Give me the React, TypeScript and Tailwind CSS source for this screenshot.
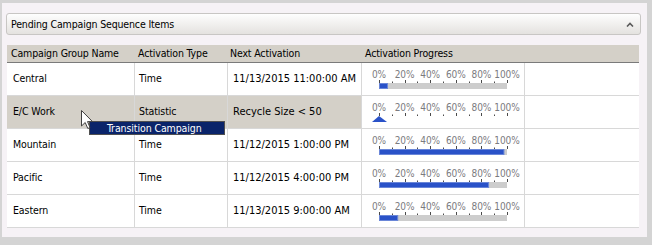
import React from "react";

const FONT = "'DejaVu Sans Condensed', 'DejaVu Sans', sans-serif";

type Row = {
  name: string;
  type: string;
  next: string;
  value: number | null;
  selected?: boolean;
};

const rows: Row[] = [
  { name: "Central", type: "Time", next: "11/13/2015 11:00:00 AM", value: 0.07 },
  { name: "E/C Work", type: "Statistic", next: "Recycle Size < 50", value: null, selected: true },
  { name: "Mountain", type: "Time", next: "11/12/2015 1:00:00 PM", value: 0.98 },
  { name: "Pacific", type: "Time", next: "11/12/2015 4:00:00 PM", value: 0.86 },
  { name: "Eastern", type: "Time", next: "11/13/2015 9:00:00 AM", value: 0.15 },
];

function Progress({ value }: { value: number | null }) {
  const x0 = 17;
  const w = 128;
  const labels = ["0%", "20%", "40%", "60%", "80%", "100%"];
  return (
    <svg width="163" height="32" viewBox="0 0 163 32" className="block">
      {labels.map((l, i) => (
        <text
          key={l}
          x={x0 + i * 25.6}
          y={15}
          textAnchor="middle"
          fontSize="10"
          fill="#7b7b80"
          fontFamily={FONT}
        >
          {l}
        </text>
      ))}
      {value !== null && <rect x={x0} y={20} width={w} height={6} fill="#cdcdcd" />}
      {Array.from({ length: 11 }, (_, i) => {
        const x = Math.round(x0 + i * 12.8) + 0.5;
        const major = i % 2 === 0;
        return (
          <line
            key={i}
            x1={x}
            x2={x}
            y1={major ? 17 : 18.5}
            y2={20}
            stroke="#4a4a4a"
            strokeWidth={1}
          />
        );
      })}
      {value !== null && (
        <rect
          x={x0 + 0.5}
          y={20.5}
          width={Math.max(0, value * w - 1)}
          height={5}
          fill="#2a52c8"
          stroke="#6a86d8"
          strokeWidth={1}
        />
      )}
      {value === null && <polygon points="17,20 10,26 25,26" fill="#2a52c8" />}
    </svg>
  );
}

export default function App() {
  return (
    <div
      className="w-[652px] h-[245px] bg-[#d4d4d4] pt-[3px] pl-[2px] pr-[5px] pb-[8px]"
      style={{ fontFamily: FONT }}
    >
      <div className="h-full bg-[#f6f2f6] flex flex-col">
        {/* Header bar */}
        <div className="mt-[10px] ml-[4px] mr-[6px] h-[22px] rounded-[3px] border border-[#c8c6c4] bg-gradient-to-b from-[#fefefe] to-[#e4e2df] flex items-center justify-between pl-[4px] pr-[6px]">
          <span className="text-[10.5px] tracking-[-0.15px] text-black leading-none">Pending Campaign Sequence Items</span>
          <svg width="8" height="5" viewBox="0 0 8 5">
            <path d="M1 4.5 L4 1.5 L7 4.5" fill="none" stroke="#5a5a5a" strokeWidth="1.6" />
          </svg>
        </div>

        {/* Table */}
        <div className="relative mt-[10px] ml-[5px] w-[632px] bg-white">
          <div className="grid grid-cols-[128px_93px_134px_163px_114px] h-[18px] bg-[#d4d0c8] border-b border-[#7a7a7a] text-[10.5px] tracking-[-0.15px] text-black">
            <div className="pl-[4px] flex items-center">Campaign Group Name</div>
            <div className="pl-[3px] flex items-center">Activation Type</div>
            <div className="pl-[2px] flex items-center">Next Activation</div>
            <div className="pl-[3px] flex items-center">Activation Progress</div>
            <div />
          </div>
          {rows.map((r) => {
            const bg = r.selected ? "bg-[#d4d0c8]" : "bg-white";
            return (
              <div
                key={r.name}
                className="grid grid-cols-[128px_93px_134px_163px_114px] h-[33px] text-[10.5px] tracking-[-0.1px] text-black"
              >
                <div className={`${bg} border-r border-b border-[#d8d8d8] pl-[6px] flex items-center`}>{r.name}</div>
                <div className={`${bg} border-r border-b border-[#d8d8d8] pl-[4px] flex items-center`}>{r.type}</div>
                <div className={`${bg} border-r border-b border-[#d8d8d8] pl-[5px] flex items-center text-[11px] tracking-normal`}>{r.next}</div>
                <div className="bg-white border-r border-b border-[#d8d8d8]">
                  <Progress value={r.value} />
                </div>
                <div className="bg-white border-b border-[#d8d8d8]" />
              </div>
            );
          })}

          {/* Context menu */}
          <div className="absolute left-[82px] top-[76px] w-[136px] h-[14px] bg-[#0a246a] border border-[#505050] flex items-center pl-[17px] text-[10.5px] tracking-[-0.1px] text-white leading-none">
            Transition Campaign
          </div>

          {/* Mouse cursor */}
          <svg
            className="absolute left-[74px] top-[65px]"
            width="13"
            height="20"
            viewBox="0 0 13 20"
          >
            <path
              d="M0.5 0.5 L0.5 16 L4.2 12.5 L6.8 18.5 L9 17.5 L6.5 11.6 L11.5 11.6 Z"
              fill="#ffffff"
              stroke="#404040"
              strokeWidth="1"
              strokeLinejoin="round"
            />
          </svg>
        </div>
      </div>
    </div>
  );
}
